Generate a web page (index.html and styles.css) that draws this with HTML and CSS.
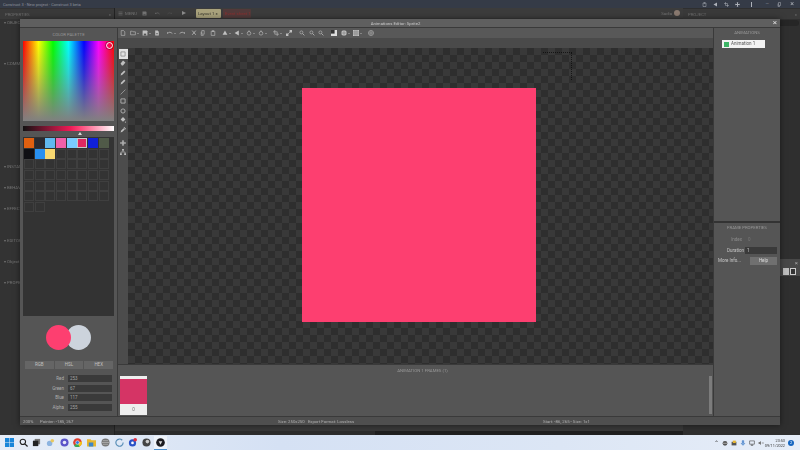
FILE: index.html
```html
<!DOCTYPE html>
<html lang="en">
<head>
    <meta charset="UTF-8">
    <meta name="viewport" content="width=device-width, initial-scale=1.0">
    <title>Construct 3 - New project</title>
    <link rel="stylesheet" href="styles.css">
</head>
<body>
    <svg class="defs" width="0" height="0">
        <defs>
            <symbol id="i-new" viewBox="0 0 10 10"><path d="M2 1h4l2 2v6H2z" fill="none" stroke="currentColor"/></symbol>
            <symbol id="i-open" viewBox="0 0 10 10"><path d="M1 2h3l1 1h4v5H1z" fill="none" stroke="currentColor"/></symbol>
            <symbol id="i-save" viewBox="0 0 10 10"><path d="M1 1h7l1 1v7H1z" fill="currentColor"/><path d="M3 6h4v3H3z" fill="#555"/></symbol>
            <symbol id="i-saveas" viewBox="0 0 10 10"><path d="M2 1h4l2 2v6H2z" fill="currentColor"/><path d="M4 5h2v2H4z" fill="#555"/></symbol>
            <symbol id="i-undo" viewBox="0 0 10 10"><path d="M1 6c2-3 5-3 8 0M1 6V3.500" fill="none" stroke="currentColor" stroke-width="1.200"/></symbol>
            <symbol id="i-redo" viewBox="0 0 10 10"><path d="M1 6c3-3 6-3 8 0M9 6V3.500" fill="none" stroke="currentColor" stroke-width="1.200"/></symbol>
            <symbol id="i-cut" viewBox="0 0 10 10"><path d="M2 1l6 7M8 1L2 8" stroke="currentColor" stroke-width="1.300"/></symbol>
            <symbol id="i-copy" viewBox="0 0 10 10"><path d="M3 1h4v6H3zM2 3v6h4" fill="none" stroke="currentColor"/></symbol>
            <symbol id="i-paste" viewBox="0 0 10 10"><path d="M2 2h6v7H2z" fill="none" stroke="currentColor"/><path d="M3.500 1h3v2h-3z" fill="currentColor"/></symbol>
            <symbol id="i-flip" viewBox="0 0 10 10"><path d="M5 1L1 8h8z" fill="currentColor"/></symbol>
            <symbol id="i-mirror" viewBox="0 0 10 10"><path d="M1 5l7-4v8z" fill="currentColor"/></symbol>
            <symbol id="i-rotate" viewBox="0 0 10 10"><circle cx="5" cy="5.500" r="3" fill="none" stroke="currentColor"/><path d="M5 0.500v3" stroke="currentColor"/></symbol>
            <symbol id="i-crop" viewBox="0 0 10 10"><path d="M3 0v7h7M0 3h7v7" fill="none" stroke="currentColor"/></symbol>
            <symbol id="i-resize" viewBox="0 0 10 10"><path d="M2.500 7.500l5-5" stroke="currentColor"/><path d="M0 6h4v4H0zM6 0h4v4H6z" fill="currentColor"/></symbol>
            <symbol id="i-zoom" viewBox="0 0 10 10"><circle cx="4" cy="4" r="2.500" fill="none" stroke="currentColor"/><path d="M6 6l3 3" stroke="currentColor" stroke-width="1.300"/></symbol>
            <symbol id="i-bg" viewBox="0 0 10 10"><path d="M0 0h10v10H0z" fill="#ddd"/><path d="M0 0h6v6H0z" fill="#333"/></symbol>
            <symbol id="i-ball" viewBox="0 0 10 10"><circle cx="5" cy="5" r="4.500" fill="currentColor"/><path d="M0 5h10M5 0v10" stroke="#555" stroke-width="0.600"/></symbol>
            <symbol id="i-grid" viewBox="0 0 10 10"><path d="M0 0h10v10H0z" fill="currentColor"/><path d="M3.300 0v10M6.600 0v10M0 3.300h10M0 6.600h10" stroke="#555" stroke-width="0.600"/></symbol>
            <symbol id="i-target" viewBox="0 0 10 10"><circle cx="5" cy="5" r="4.200" fill="none" stroke="currentColor"/><circle cx="5" cy="5" r="2" fill="none" stroke="currentColor"/></symbol>
            <symbol id="i-eraser" viewBox="0 0 10 10"><path d="M1 6l4-5 4 3-4 5H3z" fill="currentColor"/></symbol>
            <symbol id="i-pencil" viewBox="0 0 10 10"><path d="M1 9l1-3 5-5 2 2-5 5z" fill="currentColor"/></symbol>
            <symbol id="i-line" viewBox="0 0 10 10"><path d="M1 9l8-8" stroke="currentColor"/></symbol>
            <symbol id="i-rect" viewBox="0 0 10 10"><path d="M1.500 1.500h7v7h-7z" fill="none" stroke="currentColor" stroke-width="1.300"/></symbol>
            <symbol id="i-ellipse" viewBox="0 0 10 10"><circle cx="5" cy="5" r="3.500" fill="none" stroke="currentColor" stroke-width="1.300"/></symbol>
            <symbol id="i-fill" viewBox="0 0 10 10"><path d="M5 0l4 4-4 4-4-4z" fill="currentColor"/><circle cx="9" cy="8.500" r="1" fill="currentColor"/></symbol>
            <symbol id="i-picker" viewBox="0 0 10 10"><path d="M1 9l1-3 4-4 2 2-4 4zM6 1l1-1 3 3-1 1z" fill="currentColor"/></symbol>
            <symbol id="i-move" viewBox="0 0 10 10"><path d="M5 0l2 2H6v2h2V3l2 2-2 2V6H6v2h1l-2 2-2-2h1V6H2v1L0 5l2-2v1h2V2H3z" fill="currentColor"/></symbol>
            <symbol id="i-tree" viewBox="0 0 10 10"><path d="M3.500 0h3v3h-3zM0 7h3v3H0zM7 7h3v3H7z" fill="currentColor"/><path d="M5 3v2M1.500 7V5h7v2" fill="none" stroke="currentColor"/></symbol>
            <symbol id="i-menu" viewBox="0 0 10 10"><path d="M1 2h8M1 5h8M1 8h8" stroke="currentColor" stroke-width="1.200"/></symbol>
        </defs>
    </svg>

    <div class="desktop">
        <div class="titlebar">
            <span class="titlebar-text">Construct 3 - New project - Construct 3 beta</span>
            <div class="titlebar-icons">
                <svg class="ticon"><use href="#i-paste"/></svg>
                <svg class="ticon"><use href="#i-mirror"/></svg>
                <svg class="ticon"><use href="#i-crop"/></svg>
                <svg class="ticon"><use href="#i-move"/></svg>
                <span class="tsep"></span>
                <span class="tchar tdim">&#8722;</span>
                <svg class="ticon"><use href="#i-copy"/></svg>
                <span class="tchar">&#215;</span>
            </div>
        </div>

        <div class="app">
            <aside class="back-left">
                <div class="back-head"><span>PROPERTIES</span><span>&#215;</span></div>
                <div class="back-label first">&#9662; OBJECT</div>
                <div class="back-label comm">&#9662; COMMON</div>
                <div class="back-label inst">&#9662; INSTANCE</div>
                <div class="back-label">&#9662; BEHAVIORS</div>
                <div class="back-label">&#9662; EFFECTS</div>
                <div class="back-label eff">&#9662; EDITOR</div>
                <div class="back-label">&#9662; Object</div>
                <div class="back-label">&#9662; PROPERTIES</div>
            </aside>
            <main class="back-main">
                <div class="back-bar">
                    <svg class="ticon burger"><use href="#i-menu"/></svg>
                    <span class="menu">MENU</span>
                    <svg class="ticon save"><use href="#i-save"/></svg>
                    <svg class="ticon undo"><use href="#i-undo"/></svg>
                    <svg class="ticon dim"><use href="#i-redo"/></svg>
                    <span class="play"></span>
                    <span class="tab tab-layout">Layout 1 &#215;</span>
                    <span class="tab tab-events">Event sheet 1</span>
                    <span class="user">Sadia</span>
                    <span class="avatar"></span>
                </div>
                <div class="back-fill"></div>
                <div class="back-foot"></div>
            </main>
            <aside class="back-right">
                <div class="back-head"><span>PROJECT</span><span>&#215;</span></div>
                <div class="back-search"></div>
                <div class="back-tile"><span class="tile-x">&#215;</span><div class="tile-icons"><span></span><span></span></div></div>
            </aside>
        </div>

        <div class="taskbar">
            <div class="task-icons">
                <span class="task"><svg class="win" viewBox="0 0 10 10"><path d="M0 0h4.700v4.700H0zM5.300 0H10v4.700H5.300zM0 5.300h4.700V10H0zM5.300 5.300H10V10H5.300z" fill="#1a86d8"/></svg></span>
                <span class="task"><svg class="ticon-lg" viewBox="0 0 10 10"><circle cx="4.300" cy="4.300" r="3" fill="none" stroke="#222" stroke-width="1.200"/><path d="M6.500 6.500l3 3" stroke="#222" stroke-width="1.400"/></svg></span>
                <span class="task"><svg class="ticon-lg" viewBox="0 0 10 10"><path d="M3 1h6v6H3z" fill="#777"/><path d="M1 3h6v6H1z" fill="#222"/></svg></span>
                <span class="task"><svg class="ticon-lg" viewBox="0 0 10 10"><circle cx="4" cy="6" r="3" fill="#8db4e0"/><circle cx="7" cy="3" r="2" fill="#e8c860"/></svg></span>
                <span class="task"><svg class="ticon-lg" viewBox="0 0 10 10"><circle cx="5" cy="5" r="4.500" fill="#5b54c8"/><circle cx="5" cy="5" r="2" fill="#e6e6f8"/></svg></span>
                <span class="task"><svg class="ticon-lg" viewBox="0 0 10 10"><circle cx="5" cy="5" r="4.800" fill="#e04030"/><path d="M5 5L1 8.500A4.800 4.800 0 0 0 8 9z" fill="#3aa757"/><path d="M5 5l4.800-1A4.800 4.800 0 0 1 7 9.500z" fill="#f5c518"/><circle cx="5" cy="5" r="2" fill="#2a78e4" stroke="#fff" stroke-width="0.600"/></svg></span>
                <span class="task"><svg class="ticon-lg" viewBox="0 0 10 10"><path d="M0 1.500h4l1 1h5v7H0z" fill="#e8b730"/><path d="M2 5h5v4.500H2z" fill="#3b86c8"/></svg></span>
                <span class="task"><svg class="ticon-lg" viewBox="0 0 10 10"><circle cx="5" cy="5" r="4.500" fill="#777"/><path d="M1 5h8M2 3h6M2 7h6" stroke="#ccc" stroke-width="0.600"/></svg></span>
                <span class="task"><svg class="ticon-lg" viewBox="0 0 10 10"><path d="M8 2.500A4 4 0 1 0 9 5" fill="none" stroke="#5a8fb8" stroke-width="1.300"/></svg></span>
                <span class="task"><svg class="ticon-lg" viewBox="0 0 10 10"><circle cx="5" cy="5.500" r="4" fill="#2a52c8"/><circle cx="5" cy="5.500" r="1.500" fill="#fff"/><circle cx="8" cy="2" r="2" fill="#e03040"/></svg></span>
                <span class="task"><svg class="ticon-lg" viewBox="0 0 10 10"><circle cx="5" cy="5" r="4.500" fill="#444"/><circle cx="6" cy="4" r="2" fill="#ccc"/></svg></span>
                <span class="task task-active"><svg class="ticon-lg" viewBox="0 0 10 10"><circle cx="5" cy="5" r="4.800" fill="#1b1b20"/><path d="M3 3.500h4L5 7.500z" fill="#ddd"/></svg></span>
            </div>
            <div class="tray">
                <span class="tray-up">&#8963;</span>
                <svg class="tray-icon" viewBox="0 0 10 10"><circle cx="5" cy="5.500" r="4" fill="#555"/><path d="M1 5.500h8" stroke="#ddd"/></svg>
                <svg class="tray-icon" viewBox="0 0 10 10"><path d="M1 3h8v6H1z" fill="#555"/><path d="M3 1h5v4H3z" fill="#e8b730"/></svg>
                <svg class="tray-icon" viewBox="0 0 10 10"><path d="M3.500 1h3v5h-3zM2 5c0 4 6 4 6 0M5 8v2" fill="#5b8fd0" stroke="#5b8fd0" stroke-width="0.600"/></svg>
                <svg class="tray-icon" viewBox="0 0 10 10"><path d="M1 1.500h8v5.500H1zM3 9h4M5 7v2" fill="none" stroke="#444"/></svg>
                <svg class="tray-icon" viewBox="0 0 10 10"><path d="M1 3.500h2l2-2v7l-2-2H1z" fill="#777"/><path d="M6.500 3.500l3 3M9.500 3.500l-3 3" stroke="#777" stroke-width="0.700"/></svg>
                <div class="clock"><span>23:53</span><span>09/11/2022</span></div>
                <span class="notify">2</span>
            </div>
        </div>
    </div>

    <!-- Animations editor dialog -->
    <section class="dialog">
        <div class="dialog-title"><span>Animations Editor: Sprite2</span><span class="dialog-close">&#215;</span></div>
        <div class="dialog-body">
            <div class="palette">
                <div class="pane-title">COLOR PALETTE</div>
                <div class="picker"><span class="picker-dot"></span></div>
                <div class="shade"><span class="shade-mark"></span></div>
                <div class="swatches">
                    <span class="swatch orange"></span><span class="swatch dark"></span><span class="swatch sky"></span><span class="swatch pink"></span><span class="swatch pale"></span><span class="swatch current"></span><span class="swatch blue"></span><span class="swatch moss"></span>
                    <span class="swatch black"></span><span class="swatch azure"></span><span class="swatch yellow"></span><span class="swatch"></span><span class="swatch"></span><span class="swatch"></span><span class="swatch"></span><span class="swatch"></span>
                    <span class="swatch"></span><span class="swatch"></span><span class="swatch"></span><span class="swatch"></span><span class="swatch"></span><span class="swatch"></span><span class="swatch"></span><span class="swatch"></span>
                    <span class="swatch"></span><span class="swatch"></span><span class="swatch"></span><span class="swatch"></span><span class="swatch"></span><span class="swatch"></span><span class="swatch"></span><span class="swatch"></span>
                    <span class="swatch"></span><span class="swatch"></span><span class="swatch"></span><span class="swatch"></span><span class="swatch"></span><span class="swatch"></span><span class="swatch"></span><span class="swatch"></span>
                    <span class="swatch"></span><span class="swatch"></span><span class="swatch"></span><span class="swatch"></span><span class="swatch"></span><span class="swatch"></span><span class="swatch"></span><span class="swatch"></span>
                    <span class="swatch"></span><span class="swatch"></span>
                </div>
                <div class="circles"><span class="circle circle-front"></span><span class="circle circle-back"></span></div>
                <div class="modes"><span class="mode">RGB</span><span class="mode">HSL</span><span class="mode">HEX</span></div>
                <div class="channels">
                    <label>Red</label><span class="field">253</span>
                    <label>Green</label><span class="field">67</span>
                    <label>Blue</label><span class="field">117</span>
                    <label>Alpha</label><span class="field">255</span>
                </div>
            </div>

            <div class="center">
                <div class="toolbar">
                    <svg class="tool first"><use href="#i-new"/></svg>
                    <svg class="tool tight"><use href="#i-open"/></svg><span class="caret"></span>
                    <svg class="tool"><use href="#i-save"/></svg><span class="caret"></span>
                    <svg class="tool"><use href="#i-saveas"/></svg>
                    <svg class="tool wide"><use href="#i-undo"/></svg><span class="caret"></span>
                    <svg class="tool"><use href="#i-redo"/></svg>
                    <svg class="tool"><use href="#i-cut"/></svg>
                    <svg class="tool tight"><use href="#i-copy"/></svg>
                    <svg class="tool tight"><use href="#i-paste"/></svg>
                    <svg class="tool"><use href="#i-flip"/></svg><span class="caret"></span>
                    <svg class="tool"><use href="#i-mirror"/></svg><span class="caret"></span>
                    <svg class="tool"><use href="#i-rotate"/></svg><span class="caret"></span>
                    <svg class="tool"><use href="#i-rotate"/></svg><span class="caret"></span>
                    <svg class="tool xwide"><use href="#i-crop"/></svg><span class="caret"></span>
                    <svg class="tool wide"><use href="#i-resize"/></svg>
                    <svg class="tool wide"><use href="#i-zoom"/></svg>
                    <svg class="tool tight"><use href="#i-zoom"/></svg>
                    <svg class="tool tight"><use href="#i-zoom"/></svg>
                    <svg class="tool wide"><use href="#i-bg"/></svg>
                    <svg class="tool tight"><use href="#i-ball"/></svg><span class="caret"></span>
                    <svg class="tool"><use href="#i-grid"/></svg><span class="caret"></span>
                    <svg class="tool xwide"><use href="#i-target"/></svg>
                </div>
                <div class="subbar"></div>
                <div class="work">
                    <div class="tools">
                        <span class="side-tool selected"><svg><use href="#i-rect"/></svg></span>
                        <span class="side-tool"><svg><use href="#i-eraser"/></svg></span>
                        <span class="side-tool"><svg><use href="#i-pencil"/></svg></span>
                        <span class="side-tool"><svg><use href="#i-pencil"/></svg></span>
                        <span class="side-tool"><svg><use href="#i-line"/></svg></span>
                        <span class="side-tool"><svg><use href="#i-rect"/></svg></span>
                        <span class="side-tool"><svg><use href="#i-ellipse"/></svg></span>
                        <span class="side-tool"><svg><use href="#i-fill"/></svg></span>
                        <span class="side-tool"><svg><use href="#i-picker"/></svg></span>
                        <span class="side-tool gap"><svg><use href="#i-move"/></svg></span>
                        <span class="side-tool"><svg><use href="#i-tree"/></svg></span>
                    </div>
                    <div class="canvas">
                        <div class="sprite"></div>
                        <span class="selection"></span>
                    </div>
                </div>
                <div class="frames">
                    <div class="pane-title frames-title">ANIMATION 1 FRAMES (1)</div>
                    <div class="frames-row">
                        <div class="frame"><div class="frame-pic"></div><div class="frame-num">0</div></div>
                        <span class="frames-scroll"></span>
                    </div>
                </div>
            </div>

            <div class="side">
                <div class="anims">
                    <div class="pane-title">ANIMATIONS</div>
                    <div class="anim-item"><span class="anim-icon"></span>Animation 1</div>
                </div>
                <div class="props">
                    <div class="pane-title">FRAME PROPERTIES</div>
                    <div class="prop-grid">
                        <label class="dim-label">Index</label><span class="prop-value">0</span>
                        <label class="strong">Duration</label><span class="field prop-field">1</span>
                        <label class="strong more">More Info...</label><span class="help">Help</span>
                    </div>
                </div>
            </div>
        </div>
        <div class="status">
            <span class="status-zoom">200%</span>
            <span class="status-pointer">Pointer: -185, 267</span>
            <span class="status-size">Size: 250x250 &nbsp; Export Format: Lossless</span>
            <span class="status-start">Start: -86, 265 - Size: 1x1</span>
        </div>
    </section>
</body>
</html>
```

FILE: styles.css
```css
* {
    box-sizing: border-box;
}

body {
    margin: 0;
    width: 800px;
    height: 450px;
    overflow: hidden;
    font-family: Roboto, "Liberation Sans", sans-serif;
    font-size: 5px;
    color: #b0b0b0;
    background: #2c2c2c;
    position: relative;
}

.defs {
    position: absolute;
}

svg {
    display: block;
}

/* the reference is a soft video frame */
.desktop,
.dialog {
    filter: blur(0.25px);
}

.desktop {
    height: 450px;
    display: flex;
    flex-direction: column;
}

.titlebar {
    height: 8px;
    background: #353b47;
    display: flex;
    align-items: center;
    justify-content: space-between;
    padding: 0 4px 0 3px;
    color: #8d929c;
    font-size: 4px;
}

.titlebar-icons {
    display: flex;
    align-items: center;
    gap: 6px;
    color: #aeb2ba;
}

.ticon {
    width: 5px;
    height: 5px;
}

.tsep {
    width: 1px;
    height: 5px;
    background: #aeb2ba;
    margin: 0 5px;
}

.tchar {
    font-size: 7px;
    line-height: 7px;
    width: 8px;
    text-align: center;
}

.tdim {
    color: #6e737d;
}

/* project behind the dialog */
.app {
    flex: 1;
    display: flex;
    min-height: 0;
}

.back-left {
    width: 115px;
    background: #333;
    border-right: 1px solid #222;
    padding-top: 1px;
}

.back-head {
    height: 10px;
    display: flex;
    justify-content: space-between;
    align-items: center;
    background: #3a3a3a;
    padding: 0 3px 0 5px;
    color: #6d6d6d;
    font-size: 4.300px;
}

.back-label {
    height: 7px;
    margin: 14px 0 0 4px;
    color: #747474;
    font-size: 4.300px;
    white-space: nowrap;
}

.back-label.first {
    margin-top: 1px;
}

.back-label.comm {
    margin-top: 34px;
}

.back-label.inst {
    margin-top: 96px;
}

.back-label.eff {
    margin-top: 25px;
}

.back-main {
    flex: 1;
    display: flex;
    flex-direction: column;
}

.back-bar {
    height: 10px;
    background: #3c3c3c;
    display: flex;
    align-items: center;
    padding-left: 3px;
    color: #747474;
    font-size: 4.300px;
}

.burger {
    margin-right: 2px;
}

.menu {
    width: 11px;
    margin-right: 6px;
}

.ticon.undo {
    margin-left: 8px;
}

.ticon.dim {
    margin-left: 7px;
    opacity: 0.4;
}

.play {
    margin: 0 10px;
    border-left: 4px solid #8c8c8c;
    border-top: 2.500px solid transparent;
    border-bottom: 2.500px solid transparent;
}

.tab {
    height: 9px;
    line-height: 9px;
    padding: 0 2px;
    border-radius: 1px;
    white-space: nowrap;
    overflow: hidden;
}

.tab-layout {
    width: 25px;
    background: #a9a27c;
    color: #35342a;
    margin-right: 2px;
}

.tab-events {
    width: 28px;
    background: #533a3a;
    color: #8c2f2f;
}

.user {
    margin-left: auto;
    margin-right: 2px;
}

.avatar {
    width: 6px;
    height: 6px;
    border-radius: 50%;
    background: #8a7a70;
    margin-right: 3px;
}

.back-fill {
    flex: 1;
    background: #383838;
}

.back-foot {
    height: 4px;
    margin-left: 260px;
    background: #1f1f1f;
}

.back-right {
    width: 117px;
    background: #2f2f2f;
    padding-top: 1px;
}

.back-search {
    height: 6px;
    margin: 1px 1px 0 95px;
    background: #262626;
    border-radius: 3px;
}

.back-tile {
    height: 17px;
    margin-top: 233px;
    padding: 1px 2px 0 0;
    background: #484848;
    text-align: right;
    color: #aaa;
    font-size: 6px;
    line-height: 6px;
}

.tile-icons {
    display: flex;
    justify-content: flex-start;
    gap: 1px;
    margin: 2px 0 0 100px;
}

.tile-icons span {
    width: 6px;
    height: 7px;
    background: #bdbdbd;
}

.tile-icons span + span {
    background: #333;
    border: 1px solid #ccc;
}

/* windows taskbar */
.taskbar {
    height: 15px;
    background: linear-gradient(90deg, #e6edf7 0%, #d5e1f4 35%, #dce6f5 70%, #e6edf8 100%);
    display: flex;
    justify-content: space-between;
    align-items: center;
    padding: 0 6px 0 3px;
}

.task-icons {
    display: flex;
    gap: 0.700px;
}

.task {
    width: 13px;
    height: 14px;
    display: flex;
    align-items: center;
    justify-content: center;
}

.task-active {
    background: #eef3fa;
    border-bottom: 1px solid #4a8fd0;
}

.win,
.ticon-lg {
    width: 9px;
    height: 9px;
}

.tray {
    display: flex;
    align-items: center;
    gap: 3px;
    color: #333;
}

.tray-up {
    font-size: 6px;
    width: 5px;
}

.tray-icon {
    width: 6px;
    height: 6px;
}

.clock {
    display: flex;
    flex-direction: column;
    align-items: flex-end;
    font-size: 3.800px;
    line-height: 5px;
    width: 17px;
    margin-left: 1px;
}

.notify {
    width: 6px;
    height: 6px;
    line-height: 6px;
    border-radius: 50%;
    background: #1565c0;
    color: #fff;
    font-size: 4px;
    text-align: center;
}

/* dialog window, floats over the project */
.dialog {
    position: absolute;
    left: 20px;
    top: 19px;
    width: 760px;
    height: 406px;
    background: #3a3a3a;
    display: flex;
    flex-direction: column;
    box-shadow: 0 0 6px rgba(0, 0, 0, 0.5);
}

.dialog-title {
    height: 8px;
    background: #5f5f5f;
    display: flex;
    align-items: center;
    justify-content: center;
    position: relative;
    padding-right: 9px;
    color: #cacaca;
    font-size: 4.300px;
}

.dialog-close {
    position: absolute;
    right: 1px;
    top: 0;
    width: 8px;
    height: 8px;
    line-height: 8px;
    text-align: center;
    font-size: 8px;
    color: #ddd;
}

.dialog-body {
    height: 388px;
    margin-top: 1px;
    display: flex;
    gap: 1px;
}

.pane-title {
    text-align: center;
    color: #989898;
    font-size: 4.300px;
    line-height: 6px;
}

.frames-title {
    padding-left: 14px;
}

.palette {
    width: 97px;
    background: #555;
    padding: 4px 3px 0;
}

.picker {
    height: 80px;
    margin-top: 3px;
    position: relative;
    background:
        linear-gradient(180deg, rgba(128, 128, 128, 0) 0%, rgba(128, 128, 128, 0.35) 40%, rgba(128, 128, 128, 1) 100%),
        linear-gradient(90deg, #f00 0%, #ff0 17%, #0f0 33%, #0ff 50%, #00f 67%, #f0f 83%, #f00 100%);
}

.picker-dot {
    position: absolute;
    right: 1px;
    top: 1px;
    width: 7px;
    height: 7px;
    border-radius: 50%;
    border: 1px solid #fff;
    outline: 1px solid rgba(0, 0, 0, 0.3);
}

.shade {
    height: 5px;
    margin-top: 5px;
    position: relative;
    background: linear-gradient(90deg, #111 0%, #ee1a55 52%, #fd4375 62%, #fff 100%);
}

.shade-mark {
    position: absolute;
    left: 55px;
    top: 6px;
    border-left: 2px solid transparent;
    border-right: 2px solid transparent;
    border-bottom: 3px solid #ddd;
}

.swatches {
    height: 179px;
    margin-top: 6px;
    padding: 1px 0 0 1px;
    background: #333;
    display: grid;
    grid-template-columns: repeat(8, 10px);
    grid-auto-rows: 10px;
    gap: 0.700px;
    align-content: start;
}

.swatch {
    border: 1px solid #3f3f3f;
}

.orange { background: #e06010; border: 0; }
.dark { background: #2a2a30; border: 0; }
.sky { background: #60b8f0; border: 0; }
.pink { background: #f060a8; border: 0; }
.pale { background: #7accff; border: 0; }
.current { background: #e02860; border: 1px solid #c8c8c8; }
.blue { background: #1020d8; border: 0; }
.moss { background: #505a48; border: 0; }
.black { background: #101014; border: 0; }
.azure { background: #2890f0; border: 0; }
.yellow { background: #f8d870; border: 0; }

.circles {
    display: flex;
    justify-content: center;
    margin-top: 9px;
}

.circle {
    width: 25px;
    height: 25px;
    border-radius: 50%;
}

.circle-back {
    background: #ccd3dc;
    margin-left: -5px;
}

.circle-front {
    background: #fd3f70;
    position: relative;
    z-index: 1;
}

.modes {
    display: flex;
    gap: 1px;
    margin: 11px 0 0 2px;
    padding-right: 1px;
}

.mode {
    flex: 1;
    height: 8px;
    line-height: 8px;
    text-align: center;
    background: #656565;
    color: #c0c0c0;
    font-size: 4.500px;
}

.channels {
    display: grid;
    grid-template-columns: 41px 44px;
    grid-auto-rows: 7px;
    row-gap: 2.700px;
    column-gap: 4px;
    margin-top: 6px;
    line-height: 7px;
    font-size: 4.500px;
}

.channels label {
    text-align: right;
}

.field {
    background: #3a3a3a;
    color: #a4a4a4;
    padding-left: 2px;
    font-size: 4.500px;
    line-height: 7px;
}

.center {
    flex: 1;
    display: flex;
    flex-direction: column;
    min-width: 0;
}

.toolbar {
    height: 10px;
    background: #585858;
    display: flex;
    align-items: center;
    color: #c0c0c0;
    padding-left: 2px;
}

.tool {
    width: 6px;
    height: 6px;
    flex: none;
    margin-left: 6px;
}

.tool.first {
    margin-left: 0;
}

.tool.tight {
    margin-left: 3.500px;
}

.tool.wide {
    margin-left: 7px;
}

.tool.xwide {
    margin-left: 9.500px;
}

.caret {
    width: 2px;
    height: 1px;
    flex: none;
    margin: 0 -3px 0 1px;
    background: #858585;
}

.subbar {
    height: 10px;
    background: #4a4a4a;
}

.work {
    height: 316px;
    display: flex;
}

.tools {
    width: 10px;
    background: #4c4c4c;
    padding-top: 1px;
    display: flex;
    flex-direction: column;
    align-items: center;
    color: #c0c0c0;
}

.side-tool {
    width: 9px;
    height: 9.500px;
    display: flex;
    align-items: center;
    justify-content: center;
}

.side-tool svg {
    width: 6px;
    height: 6px;
}

.side-tool.selected {
    background: #e2e2e2;
    color: #888;
}

.side-tool.gap {
    margin-top: 3.500px;
}

.canvas {
    flex: 1;
    position: relative;
    padding: 40px 0 0 174px;
    background: repeating-conic-gradient(#2e2e2e 0% 25%, #393939 0% 50%) 0 0 / 14px 14px;
}

.sprite {
    width: 234px;
    height: 234px;
    background: #fd3f70;
}

.selection {
    position: absolute;
    left: 415px;
    top: 4px;
    width: 29px;
    height: 28px;
    border-top: 1px dotted rgba(0, 0, 0, 0.6);
    border-right: 1px dotted rgba(0, 0, 0, 0.6);
}

.frames {
    flex: 1;
    background: #555;
    border-top: 1px solid #3a3a3a;
    padding-top: 3px;
}

.frames-row {
    display: flex;
    justify-content: space-between;
    padding: 2px 1px 0 2px;
}

.frame {
    width: 27px;
    height: 39px;
    background: #eee;
    padding-top: 3px;
}

.frame-pic {
    height: 25px;
    background: #d53465;
}

.frame-num {
    text-align: center;
    color: #777;
    font-size: 4.500px;
    line-height: 11px;
}

.frames-scroll {
    width: 3px;
    height: 38px;
    background: #7c7c7c;
}

.side {
    width: 66px;
    display: flex;
    flex-direction: column;
    gap: 2px;
    background: #333;
}

.anims {
    height: 193px;
    background: #555;
    padding-top: 2px;
}

.anim-item {
    height: 8px;
    width: 43px;
    margin: 4px 0 0 8px;
    background: #f2f2f2;
    color: #555;
    font-size: 4.500px;
    line-height: 8px;
    display: flex;
    align-items: center;
    gap: 2px;
    padding-left: 2px;
}

.anim-icon {
    width: 5px;
    height: 5px;
    background: #3cb465;
}

.props {
    flex: 1;
    background: #555;
    padding-top: 2px;
}

.prop-grid {
    display: grid;
    grid-template-columns: 28px 32px;
    grid-auto-rows: 7.500px;
    row-gap: 3px;
    margin-top: 5px;
    padding-left: 3px;
    line-height: 7.500px;
    font-size: 4.500px;
}

.prop-grid label {
    text-align: right;
    padding-right: 1px;
    white-space: nowrap;
}

.prop-grid .dim-label {
    padding-right: 3px;
    color: #8c8c8c;
}

.prop-grid .strong {
    color: #c8c8c8;
}

.prop-grid .more {
    text-align: left;
    padding-left: 1px;
    overflow: visible;
}

.prop-value {
    color: #777;
    padding-left: 3px;
}

.prop-field {
    line-height: 7.500px;
    padding-left: 2px;
    background: #3a3a3a;
    color: #ccc;
}

.help {
    margin-left: 5px;
    background: #707070;
    color: #ddd;
    text-align: center;
}

.status {
    flex: 1;
    margin-top: 1px;
    background: #4f4f4f;
    display: flex;
    align-items: center;
    color: #b0b0b0;
    font-size: 4.300px;
    padding-left: 3px;
}

.status-zoom {
    width: 10px;
}

.status-pointer {
    width: 38px;
    margin-left: 7px;
    white-space: nowrap;
}

.status-size {
    width: 70px;
    margin-left: 200px;
    white-space: nowrap;
}

.status-start {
    margin-left: 195px;
}
```
